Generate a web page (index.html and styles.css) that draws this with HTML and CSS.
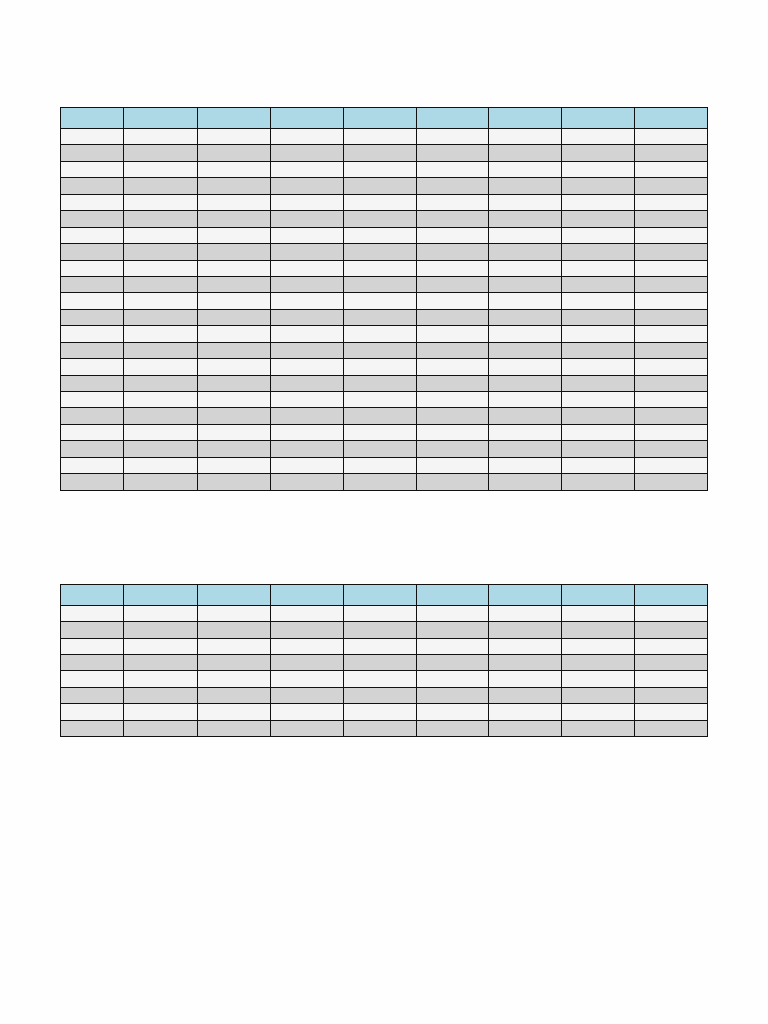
FILE: index.html
```html
<!DOCTYPE html>
<html>
<head>
<meta charset="utf-8">
<link rel="stylesheet" href="styles.css">
</head>
<body>
<main class="page">
<table class="grid grid-first">
<colgroup><col class="c-first"><col class="c-wide"><col><col><col><col><col><col><col></colgroup>
<thead><tr class="head"><th></th><th></th><th></th><th></th><th></th><th></th><th></th><th></th><th></th></tr></thead>
<tbody id="body1"></tbody>
</table>
<table class="grid grid-second">
<colgroup><col class="c-first"><col class="c-wide"><col><col><col><col><col><col><col></colgroup>
<thead><tr class="head"><th></th><th></th><th></th><th></th><th></th><th></th><th></th><th></th><th></th></tr></thead>
<tbody id="body2"></tbody>
</table>
</main>
<script src="script.js"></script>
</body>
</html>
```
FILE: styles.css
```css
html, body {
  margin: 0;
  padding: 0;
  background: #fefefe;
  font-family: "Liberation Sans", Arial, sans-serif;
}
.page {
  padding: 107px 0 0 60px;
}
.grid {
  border-collapse: collapse;
  table-layout: fixed;
  width: 648px;
  border: 1px solid #333;
}
.grid-second {
  margin-top: 93px;
}
.c-first { width: 63px; }
.c-wide { width: 74px; }
.grid th, .grid td {
  border: 1px solid #111;
  padding: 0;
}
.head { height: 21px; }
.head th { background: #add8e6; }
.grid tbody tr { height: 16.45px; }
.grid tbody tr:nth-child(odd) td { background: #f5f5f5; }
.grid tbody tr:nth-child(even) td { background: #d3d3d3; }
```
FILE: script.js
```js
function fill(id, n) {
  var tb = document.getElementById(id);
  for (var i = 0; i < n; i++) {
    var tr = document.createElement('tr');
    for (var j = 0; j < 9; j++) tr.appendChild(document.createElement('td'));
    tb.appendChild(tr);
  }
}
fill('body1', 22);
fill('body2', 8);
```
